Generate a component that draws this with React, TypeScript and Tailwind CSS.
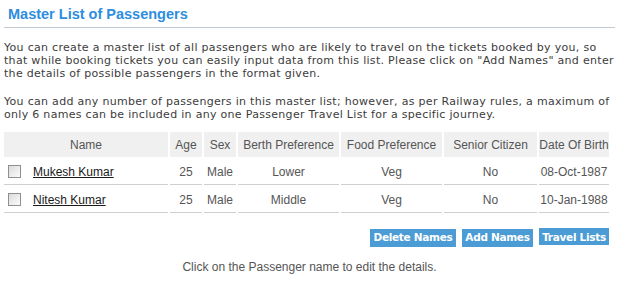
import React from "react";

const rows = [
  { name: "Mukesh Kumar", age: 25, sex: "Male", berth: "Lower", food: "Veg", senior: "No", dob: "08-Oct-1987" },
  { name: "Nitesh Kumar", age: 25, sex: "Male", berth: "Middle", food: "Veg", senior: "No", dob: "10-Jan-1988" },
];

function Checkbox() {
  return (
    <span className="inline-block w-[13px] h-[13px] border border-[#8f8f8f] bg-gradient-to-br from-[#dcdcdc] to-[#fbfbfb] align-middle" />
  );
}

export default function App() {
  return (
    <div className="w-[619px] h-[281px] bg-white px-1 overflow-hidden">
      <div className="pt-[6px] pl-1 pb-[5px] border-b border-[#c3c9d0] font-['Liberation_Sans',Arial,sans-serif] font-bold text-[14.5px] leading-[16px] text-[#2d8de0]">
        Master List of Passengers
      </div>
      <div className="font-['DejaVu_Sans',sans-serif] text-[11px] leading-[13px] tracking-[0.3px] text-[#3c3c3c] pt-[13px] -mr-[4px] whitespace-nowrap">
        <p>
          You can create a master list of all passengers who are likely to travel on the tickets booked by you, so
          <br />
          that while booking tickets you can easily input data from this list. Please click on "Add Names" and enter
          <br />
          the details of possible passengers in the format given.
        </p>
        <p className="mt-[15px]">
          You can add any number of passengers in this master list; however, as per Railway rules, a maximum of
          <br />
          only 6 names can be included in any one Passenger Travel List for a specific journey.
        </p>
      </div>
      <table className="mt-[11px] w-[609px] -ml-[2px] border-separate border-spacing-x-[2px] border-spacing-y-0 whitespace-nowrap font-['Liberation_Sans',Arial,sans-serif] text-[12px] text-[#555]">
        <thead>
          <tr className="h-[25px]">
            <th className="bg-[#f0f0f0] font-normal text-center w-[164px]">Name</th>
            <th className="bg-[#f0f0f0] font-normal text-center w-[32px]">Age</th>
            <th className="bg-[#f0f0f0] font-normal text-center w-[32px]">Sex</th>
            <th className="bg-[#f0f0f0] font-normal text-center w-[101px]">Berth Preference</th>
            <th className="bg-[#f0f0f0] font-normal text-center w-[101px]">Food Preference</th>
            <th className="bg-[#f0f0f0] font-normal text-center w-[93px]">Senior Citizen</th>
            <th className="bg-[#f0f0f0] font-normal text-center">Date Of Birth</th>
          </tr>
        </thead>
        <tbody>
          {rows.map((r) => (
            <tr key={r.name} className="h-[28px]">
              <td className="border-b border-[#cfcfcf] pl-[4px]">
                <div className="flex items-center gap-[12px] pt-[2px]">
                  <Checkbox />
                  <a href="#" className="underline text-[#1a1a1a]">{r.name}</a>
                </div>
              </td>
              <td className="border-b border-[#cfcfcf] text-center pt-[2px]">{r.age}</td>
              <td className="border-b border-[#cfcfcf] text-center pt-[2px]">{r.sex}</td>
              <td className="border-b border-[#cfcfcf] text-center pt-[2px]">{r.berth}</td>
              <td className="border-b border-[#cfcfcf] text-center pt-[2px]">{r.food}</td>
              <td className="border-b border-[#cfcfcf] text-center pt-[2px]">{r.senior}</td>
              <td className="border-b border-[#cfcfcf] text-center pt-[2px]">{r.dob}</td>
            </tr>
          ))}
        </tbody>
      </table>
      <div className="flex justify-end items-start gap-[6px] pr-[6px] mt-[15px] font-['DejaVu_Sans',sans-serif] font-bold text-[10.5px] tracking-[-0.3px] text-white">
        <button className="h-[18px] w-[86px] bg-[#4b9bd5] mt-[1px]">Delete Names</button>
        <button className="h-[18px] w-[71px] bg-[#4b9bd5] mt-[1px]">Add Names</button>
        <button className="h-[17px] w-[70px] bg-[#4b9bd5] leading-[14px]">Travel Lists</button>
      </div>
      <div className="mt-[11px] text-center font-['Liberation_Sans',Arial,sans-serif] text-[12px] text-[#555]">
        Click on the Passenger name to edit the details.
      </div>
    </div>
  );
}
